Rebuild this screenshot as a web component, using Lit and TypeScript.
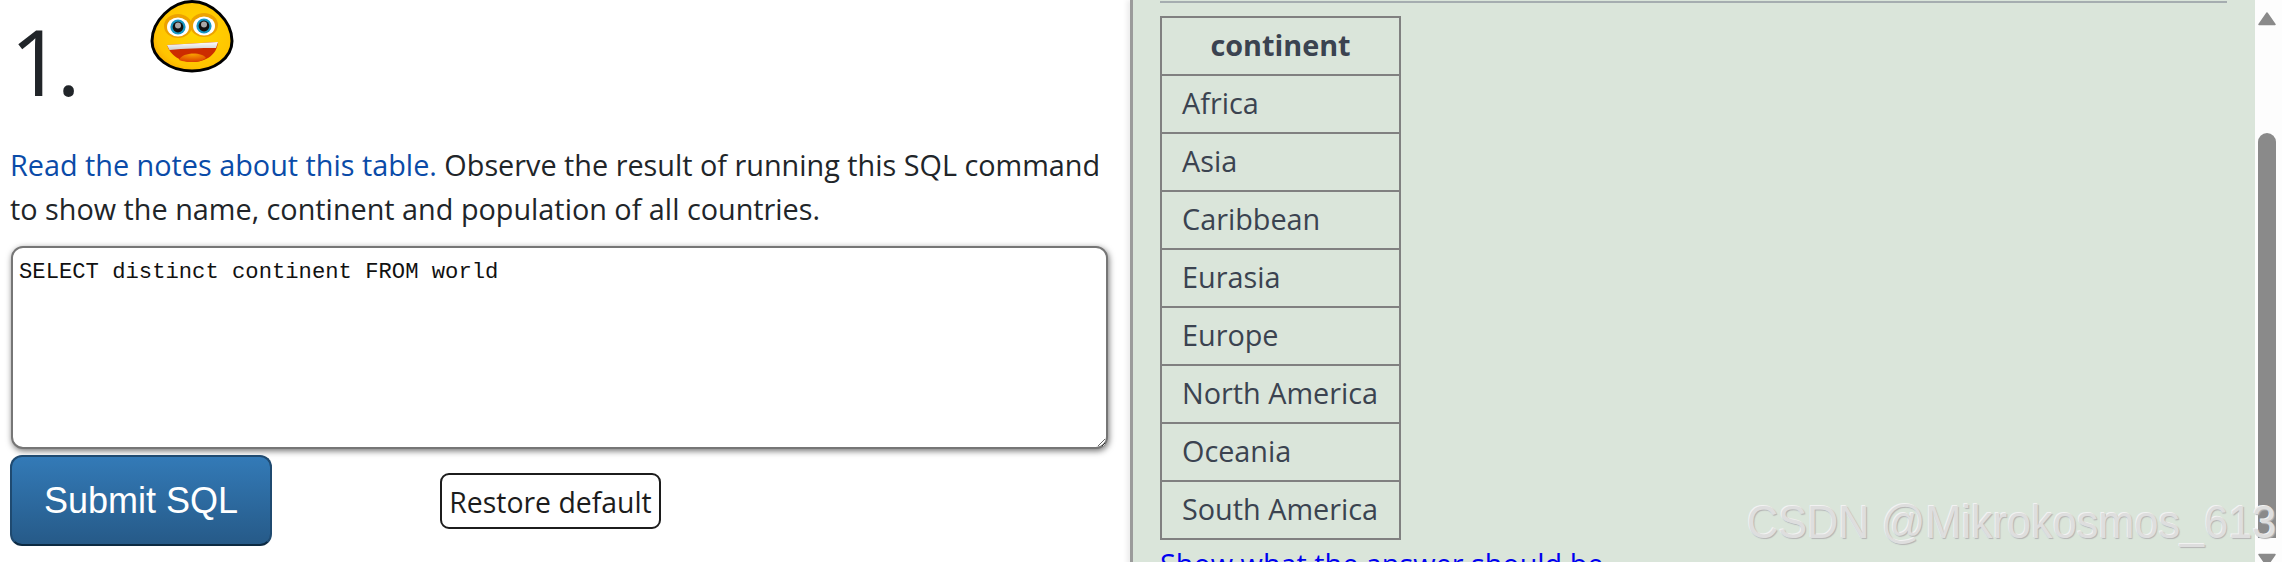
import { LitElement, html, css, svg } from "lit";
import { customElement } from "lit/decorators.js";

const CONTINENTS = ["Africa", "Asia", "Caribbean", "Eurasia", "Europe", "North America", "Oceania", "South America"];

const smiley = svg`
<svg class="smiley" viewBox="0 0 84 73" width="84" height="73" aria-hidden="true">
  <defs>
    <radialGradient id="face" cx="0.55" cy="0.45" r="0.7">
      <stop offset="0" stop-color="#ffd800"/>
      <stop offset="0.7" stop-color="#ffc400"/>
      <stop offset="1" stop-color="#f29400"/>
    </radialGradient>
    <linearGradient id="teeth" x1="0" y1="0" x2="0" y2="1">
      <stop offset="0" stop-color="#ffffff"/>
      <stop offset="1" stop-color="#cfcfcf"/>
    </linearGradient>
    <radialGradient id="tongue" cx="0.5" cy="0.1" r="0.8">
      <stop offset="0" stop-color="#f7a000"/>
      <stop offset="1" stop-color="#e04a00"/>
    </radialGradient>
  </defs>
  <path d="M42 1.5C62 1.5 82 21 82 41C82 58 64 71 42 71C20 71 2 58 2 41C2 21 22 1.5 42 1.5Z" fill="url(#face)" stroke="#000" stroke-width="3"/>
  <ellipse cx="28" cy="26" rx="14" ry="12" fill="#eda200"/>
  <ellipse cx="54" cy="25" rx="14" ry="12" fill="#eda200"/>
  <ellipse cx="28" cy="27" rx="11" ry="9.5" fill="#fff"/>
  <ellipse cx="54" cy="26" rx="11" ry="9.5" fill="#fff"/>
  <circle cx="28" cy="27" r="7.6" fill="#1798c4"/>
  <circle cx="54" cy="26" r="7.6" fill="#1798c4"/>
  <circle cx="28" cy="27" r="5.4" fill="#111"/>
  <circle cx="54" cy="26" r="5.4" fill="#111"/>
  <circle cx="28" cy="25.5" r="3" fill="#a8a8a8"/>
  <circle cx="54" cy="24.5" r="3" fill="#a8a8a8"/>
  <path d="M17 45L68 42C67 54 57 62 42 62C30 62 20 55 17 45Z" fill="#cc2c00"/>
  <path d="M29 60C32 52 52 51.5 56 58C52 61 47 62 42 62C37 62 33 61.5 29 60Z" fill="url(#tongue)"/>
  <path d="M17 45L68 42L66 48C50 48 34 48.5 19.5 50Z" fill="url(#teeth)"/>
</svg>`;

@customElement("app-root")
export class AppRoot extends LitElement {
  static styles = css`
    :host {
      display: block;
      position: relative;
      width: 2282px;
      height: 562px;
      overflow: hidden;
      background: #fff;
      font-family: "Open Sans", "Noto Sans", sans-serif;
    }
    .page {
      display: grid;
      grid-template-columns: 1130px 1125px 27px;
      height: 562px;
    }
    .left {
      padding-left: 10px;
      color: #212529;
      overflow: hidden;
    }
    .heading {
      display: flex;
      align-items: flex-start;
      height: 143px;
    }
    .num {
      margin: 0;
      font-size: 92px;
      font-weight: 400;
      line-height: 122px;
      letter-spacing: -6px;
      width: 140px;
    }
    .smiley {
      display: block;
    }
    .intro {
      margin: 0;
      width: 1100px;
      font-size: 28.8px;
      line-height: 44px;
    }
    .intro a {
      color: #0a4ba8;
      text-decoration: none;
    }
    .sql {
      display: block;
      box-sizing: border-box;
      width: 1097px;
      height: 203px;
      margin: 15px 0 6px 1px;
      padding: 11px 6px 7px;
      border: 2px solid #767676;
      border-radius: 12px;
      box-shadow: 1px 2px 6px rgba(0, 0, 0, 0.55);
      font-family: "Liberation Mono", monospace;
      font-size: 22.2px;
      line-height: 28px;
      color: #111;
      background: #fff;
      resize: both;
      outline: none;
    }
    .actions {
      display: flex;
      align-items: center;
    }
    .submit {
      box-sizing: border-box;
      width: 262px;
      height: 91px;
      border: 2px solid #1f4a70;
      border-bottom-color: #0c2a42;
      border-radius: 12px;
      background: linear-gradient(#337ab7, #265a88);
      color: #fff;
      font-family: "Liberation Sans", sans-serif;
      font-size: 36px;
      padding: 0;
    }
    .restore {
      box-sizing: border-box;
      width: 221px;
      height: 56px;
      margin-left: 168px;
      padding: 0;
      border: 2px solid #1c1c1c;
      border-radius: 9px;
      background: #fff;
      color: #1c1c1c;
      font-family: inherit;
      font-size: 28.4px;
      line-height: 54px;
    }
    .panel {
      box-sizing: border-box;
      background: #dae5da;
      border-left: 3px solid #9b9b9b;
      box-shadow: -3px 0 5px rgba(0, 0, 0, 0.08);
      padding: 1px 28px 0 27px;
      overflow: hidden;
    }
    .rule {
      height: 2px;
      background: #a5adb0;
      margin-bottom: 13px;
    }
    table {
      border-collapse: collapse;
      width: 241px;
      color: #3b4350;
      font-size: 28.8px;
    }
    th,
    td {
      box-sizing: border-box;
      height: 58px;
      padding: 0 20px 2px;
      border: 2px solid #808080;
      white-space: nowrap;
      line-height: 40px;
    }
    th {
      font-weight: 700;
      text-align: center;
    }
    td {
      text-align: left;
    }
    .answer {
      display: block;
      margin-top: 4px;
      color: #0000f0;
      font-size: 28.8px;
      line-height: 40px;
      text-decoration: none;
    }
    .scroll {
      display: flex;
      flex-direction: column;
      align-items: center;
      padding: 12px 3px 0 0;
      background: #fdfdfd;
    }
    .arrow {
      display: block;
      flex: none;
    }
    .thumb {
      width: 18px;
      height: 405px;
      margin: 107px 0 15px;
      border-radius: 9px 9px 0 0;
      background: #8a8a8a;
      flex: none;
    }
    .mark {
      position: absolute;
      left: 1747px;
      top: 494px;
      font-family: "Liberation Sans", sans-serif;
      font-size: 46px;
      line-height: 56px;
      white-space: nowrap;
      color: #dedede;
      text-shadow: 1px 1px 1px #b4b4b4, -1px -1px 0 #f2f2f2;
      transform: scaleX(0.94);
      transform-origin: left center;
    }
  `;

  render() {
    return html`
      <div class="page">
        <section class="left">
          <div class="heading">
            <h1 class="num">1.</h1>
            ${smiley}
          </div>
          <p class="intro">
            <a href="#">Read the notes about this table.</a> Observe the result of running this SQL command
            to show the name, continent and population of all countries.
          </p>
          <textarea class="sql" spellcheck="false">SELECT distinct continent FROM world</textarea>
          <div class="actions">
            <button class="submit">Submit SQL</button>
            <button class="restore">Restore default</button>
          </div>
        </section>
        <section class="panel">
          <div class="rule"></div>
          <table>
            <thead><tr><th>continent</th></tr></thead>
            <tbody>${CONTINENTS.map((c) => html`<tr><td>${c}</td></tr>`)}</tbody>
          </table>
          <a class="answer" href="#">Show what the answer should be...</a>
        </section>
        <div class="scroll">
          <svg class="arrow" width="18" height="14" viewBox="0 0 18 14" aria-hidden="true">
            <path d="M9 1L17 12.5H1Z" fill="#8a8a8a" stroke="#8a8a8a" stroke-width="1.5" stroke-linejoin="round"/>
          </svg>
          <div class="thumb"></div>
          <svg class="arrow" width="18" height="14" viewBox="0 0 18 14" aria-hidden="true">
            <path d="M9 13L17 1.5H1Z" fill="#8a8a8a" stroke="#8a8a8a" stroke-width="1.5" stroke-linejoin="round"/>
          </svg>
        </div>
      </div>
      <div class="mark">CSDN @Mikrokosmos_613</div>
    `;
  }
}
